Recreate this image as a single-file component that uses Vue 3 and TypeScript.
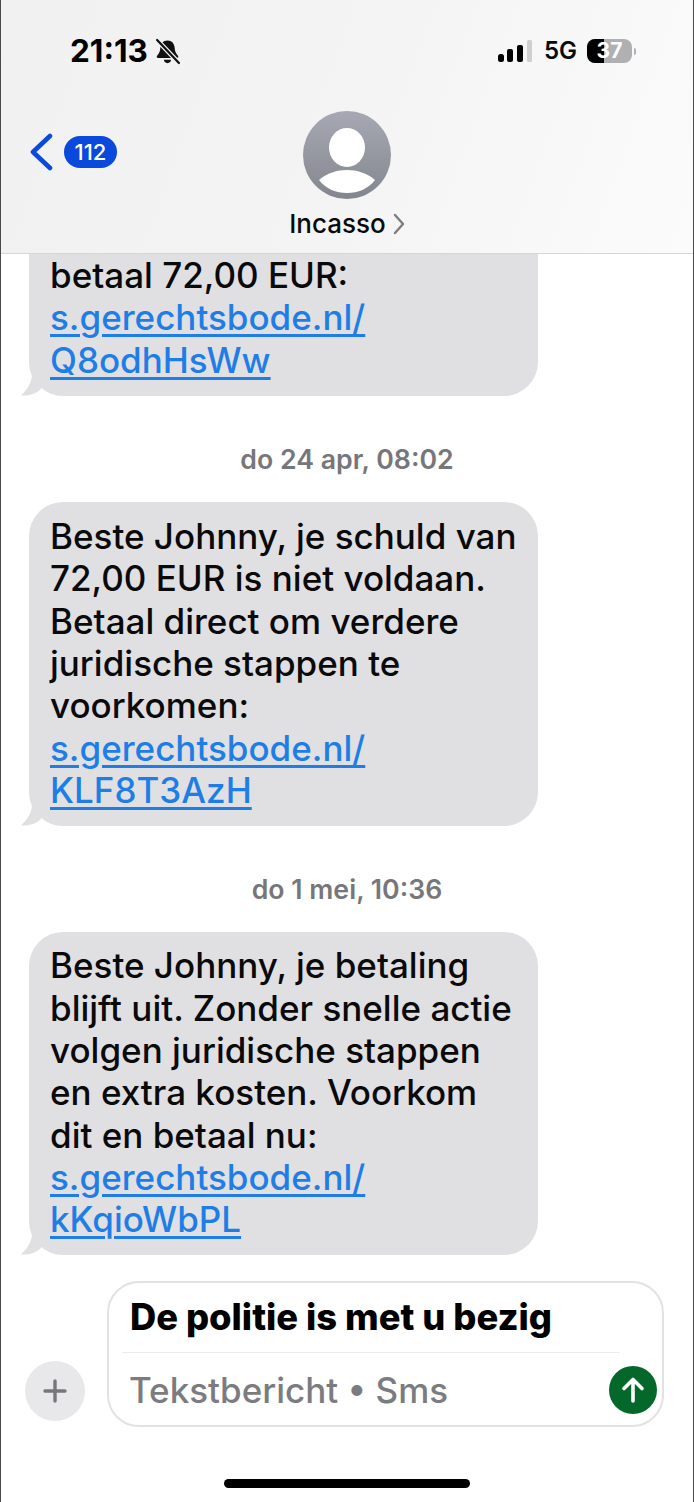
<template>
  <div class="phone">
    <header class="top">
      <div class="status">
        <div class="status-left">
          <span class="clock">21:13</span>
          <svg class="bell" viewBox="0 0 26 26" width="27" height="27">
            <path d="M13 2.500c-4.300 0-6.600 3-6.900 7-.2 3.400-.9 5.300-3.100 7.500-.8.900-.3 2.200 1 2.200h18c1.300 0 1.800-1.300 1-2.200-2.200-2.200-2.900-4.100-3.100-7.500-.3-4-2.600-7-6.900-7z" fill="#111" />
            <path d="M9.500 21h7c-.3 2-1.700 3.200-3.500 3.200S9.800 23 9.500 21z" fill="#111" />
            <path d="M3 2l21 22" stroke="#f5f5f5" stroke-width="4.500" />
            <path d="M3 2l21 22" stroke="#111" stroke-width="2.200" stroke-linecap="round" />
          </svg>
        </div>
        <div class="status-right">
          <svg class="signal" viewBox="0 0 34 22" width="34" height="22">
            <rect x="0" y="14" width="6" height="8" rx="2.500" fill="#000" />
            <rect x="9" y="9" width="6" height="13" rx="2" fill="#000" />
            <rect x="19" y="5" width="6" height="17" rx="2" fill="#000" />
            <rect x="29" y="0" width="5" height="22" rx="1.500" fill="#cfcfd1" />
          </svg>
          <span class="net">5G</span>
          <div class="battery">
            <div class="battery-fill"></div>
            <span class="battery-num">37</span>
          </div>
          <span class="battery-cap"></span>
        </div>
      </div>
      <div class="nav">
        <div class="nav-back">
          <svg viewBox="0 0 24 38" width="24" height="38">
            <path d="M21 3L4 19l17 16" fill="none" stroke="#0b48dc" stroke-width="4.600" stroke-linecap="round" stroke-linejoin="round" />
          </svg>
          <span class="count">112</span>
        </div>
        <div class="contact">
          <svg class="avatar" viewBox="0 0 88 88" width="88" height="88">
            <defs>
              <linearGradient id="av" x1="0" y1="0" x2="0" y2="1">
                <stop offset="0" stop-color="#a6a9b3" />
                <stop offset="1" stop-color="#84868f" />
              </linearGradient>
            </defs>
            <circle cx="44" cy="44" r="44" fill="url(#av)" />
            <ellipse cx="44" cy="36.500" rx="18" ry="19.500" fill="#fff" />
            <path d="M16 69C24 62 34 59 44 59S64 62 72 69C65 78 55 82 44 82S23 78 16 69Z" fill="#fff" />
          </svg>
          <div class="name">
            <span>Incasso</span>
            <svg viewBox="0 0 12 22" width="12" height="22">
              <path d="M2 2l8 9-8 9" fill="none" stroke="#7d7d80" stroke-width="2.400" stroke-linecap="round" stroke-linejoin="round" />
            </svg>
          </div>
        </div>
      </div>
    </header>

    <main class="thread">
      <template v-for="(m, i) in messages" :key="i">
        <div v-if="m.time" class="stamp">{{ m.time }}</div>
        <div class="bubble" :class="{ cut: i === 0 }">
          <template v-for="line in m.lines" :key="line">{{ line }}<br /></template>
          <template v-for="link in m.links" :key="link"><a class="link">{{ link }}</a><br /></template>
          <svg class="tail" viewBox="0 0 24 22" width="24" height="22">
            <path d="M12 0c0 8-4 15-11 21.500 7 .6 15-1.500 20-6.500L23 0z" fill="#e0e0e3" />
          </svg>
        </div>
      </template>
    </main>

    <div class="composer-row">
      <div class="plus">
        <svg viewBox="0 0 24 24" width="24" height="24">
          <path d="M12 2v20M2 12h20" stroke="#77777b" stroke-width="3.400" stroke-linecap="round" />
        </svg>
      </div>
      <div class="composer">
        <div class="subject">De politie is met u bezig</div>
        <div class="input-row">
          <span class="placeholder">Tekstbericht • Sms</span>
          <div class="send">
            <svg viewBox="0 0 24 28" width="24" height="28">
              <path d="M12 25V4M3 12.500L12 3.500l9 9" fill="none" stroke="#fff" stroke-width="3.600" stroke-linecap="round" stroke-linejoin="round" />
            </svg>
          </div>
        </div>
      </div>
    </div>

    <div class="home"></div>
  </div>
</template>

<script setup lang="ts">
interface Message {
  time?: string
  lines: string[]
  links: string[]
}

const messages: Message[] = [
  {
    lines: ['betaal 72,00 EUR:'],
    links: ['s.gerechtsbode.nl/', 'Q8odhHsWw']
  },
  {
    time: 'do 24 apr, 08:02',
    lines: ['Beste Johnny, je schuld van', '72,00 EUR is niet voldaan.', 'Betaal direct om verdere', 'juridische stappen te', 'voorkomen:'],
    links: ['s.gerechtsbode.nl/', 'KLF8T3AzH']
  },
  {
    time: 'do 1 mei, 10:36',
    lines: ['Beste Johnny, je betaling', 'blijft uit. Zonder snelle actie', 'volgen juridische stappen', 'en extra kosten. Voorkom', 'dit en betaal nu:'],
    links: ['s.gerechtsbode.nl/', 'kKqioWbPL']
  }
]
</script>

<style>
html,
body {
  margin: 0;
  background: #fff;
}
</style>

<style scoped>
.phone {
  width: 694px;
  height: 1502px;
  box-sizing: border-box;
  border-left: 1px solid #4a4a4a;
  border-right: 1px solid #4a4a4a;
  background: #fff;
  display: flex;
  flex-direction: column;
  overflow: hidden;
  font-family: Inter, 'Liberation Sans', sans-serif;
  color: #0a0a0a;
}

.top {
  height: 254px;
  flex: none;
  box-sizing: border-box;
  background: linear-gradient(110deg, #f1f1f1 0%, #f3f3f3 45%, #fbfbfb 100%);
  border-bottom: 1px solid #d6d6d6;
}
.status {
  height: 104px;
  box-sizing: border-box;
  padding: 36px 57px 0 69px;
  display: flex;
  justify-content: space-between;
  align-items: flex-start;
}
.status-left {
  display: flex;
  align-items: center;
  gap: 6px;
  height: 30px;
}
.clock {
  font-size: 31.500px;
  font-weight: 700;
  line-height: 30px;
  color: #000;
}
.status-right {
  display: flex;
  align-items: center;
  height: 30px;
}
.signal {
  margin-right: 12px;
}
.net {
  font-size: 24px;
  font-weight: 600;
  line-height: 30px;
  margin-right: 10px;
}
.battery {
  position: relative;
  width: 45px;
  height: 24px;
  border-radius: 8px;
  background: #b0b0b2;
  overflow: hidden;
}
.battery-fill {
  width: 17px;
  height: 24px;
  background: #000;
}
.battery-num {
  position: absolute;
  inset: 0;
  text-align: center;
  font-size: 21px;
  font-weight: 700;
  line-height: 24px;
  color: #fff;
}
.battery-cap {
  width: 2px;
  height: 7px;
  margin-left: 2px;
  border-radius: 0 2px 2px 0;
  background: #b0b0b2;
}

.nav {
  display: grid;
  grid-template-columns: 1fr auto 1fr;
  padding-top: 7px;
}
.nav-back {
  display: flex;
  align-items: center;
  gap: 11px;
  padding-left: 28px;
  height: 82px;
}
.count {
  width: 53px;
  height: 32px;
  border-radius: 16px;
  background: #0b48dc;
  color: #fff;
  text-align: center;
  font-size: 22px;
  font-weight: 500;
  line-height: 32px;
}
.contact {
  display: flex;
  flex-direction: column;
  align-items: center;
}
.avatar {
  display: block;
}
.name {
  margin-top: 9px;
  display: flex;
  align-items: center;
  gap: 7px;
  font-size: 26px;
  font-weight: 500;
  line-height: 32px;
}

.thread {
  flex: 1;
  padding-left: 28px;
  display: flex;
  flex-direction: column;
  align-items: flex-start;
}
.bubble {
  position: relative;
  width: 509px;
  box-sizing: border-box;
  padding: 12.500px 20px 14.500px 21px;
  border-radius: 34px;
  background: #e0e0e3;
  font-size: 35px;
  font-weight: 500;
  line-height: 42.330px;
  white-space: nowrap;
}
.bubble.cut {
  padding-top: 0;
  padding-bottom: 15.500px;
  border-radius: 0 0 34px 34px;
}
.link {
  color: #1f7ee6;
  text-decoration: underline;
  text-decoration-thickness: 3px;
  text-underline-offset: 4px;
}
.tail {
  position: absolute;
  left: -9px;
  bottom: 0;
}
.stamp {
  align-self: stretch;
  margin-left: -28px;
  padding: 47px 0 27px;
  text-align: center;
  font-size: 26.700px;
  font-weight: 600;
  line-height: 32px;
  color: #77777b;
}

.composer-row {
  flex: none;
  display: flex;
  align-items: flex-end;
  gap: 22px;
  padding-left: 24px;
  margin-bottom: 52px;
}
.plus {
  width: 60px;
  height: 60px;
  margin-bottom: 6px;
  border-radius: 50%;
  background: #e8e8ea;
  display: flex;
  align-items: center;
  justify-content: center;
}
.composer {
  width: 557px;
  height: 146px;
  box-sizing: border-box;
  padding: 0 5px 0 13px;
  border: 2px solid #e2e2e2;
  border-radius: 32px;
  background: #fff;
}
.subject {
  height: 70px;
  box-sizing: border-box;
  padding-left: 8px;
  margin-right: 37px;
  border-bottom: 1px solid #ececec;
  font-size: 36.300px;
  font-weight: 800;
  line-height: 68px;
  color: #000;
  white-space: nowrap;
}
.input-row {
  display: flex;
  justify-content: space-between;
  align-items: center;
  height: 74px;
}
.placeholder {
  padding-left: 7px;
  font-size: 35px;
  font-weight: 500;
  color: #7c7c80;
  white-space: nowrap;
}
.send {
  width: 48px;
  height: 48px;
  border-radius: 50%;
  background: #05682b;
  display: flex;
  align-items: center;
  justify-content: center;
}

.home {
  flex: none;
  align-self: center;
  width: 246px;
  height: 9px;
  margin-bottom: 14px;
  border-radius: 5px;
  background: #000;
}
</style>
